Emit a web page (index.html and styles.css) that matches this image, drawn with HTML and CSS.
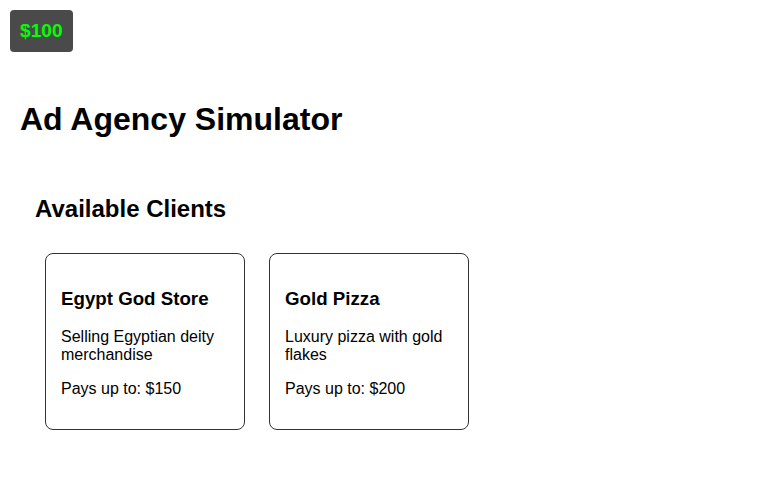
FILE: index.html
```html
<!DOCTYPE html>
<html>
  <head>
    <meta charset="UTF-8">
    <title>Ad Agency Simulator</title>
    <link rel="stylesheet" href="styles.css">
  </head>

  <body>
    <!-- ARGENT -->
    <div class="top-bar">
      <div class="money">$100</div>
    </div>

    <div class="game">
      <h1>Ad Agency Simulator</h1>

      <!-- CLIENTS -->
      <div class="clients">
        <h2>Available Clients</h2>

        <div class="client-list">
          <div class="client-card">
            <h3>Egypt God Store</h3>
            <p>Selling Egyptian deity merchandise</p>
            <p>Pays up to: $150</p>
          </div>

          <div class="client-card">
            <h3>Gold Pizza</h3>
            <p>Luxury pizza with gold flakes</p>
            <p>Pays up to: $200</p>
          </div>
        </div>
      </div>
    </div>
  </body>
</html>
```

FILE: styles.css
```css
/* CSS styles */
body {
  font-family: "Liberation Sans", Arial, sans-serif;
  background-color: white;
  color: black;
  margin: 0;
}

.top-bar {
  padding: 10px;
  display: flex;
}

.money {
  background-color: #4a4a4a;
  color: #00ff00;
  font-weight: bold;
  font-size: 19.2px;
  padding: 10px;
  border-radius: 4px;
}

.game {
  padding: 18px 20px 20px;
}

h1 {
  font-size: 32px;
  margin: 21px 0;
}

.clients {
  padding: 16px 15px 15px;
}

h2 {
  font-size: 24px;
  margin: 20px 0;
}

.client-list {
  display: flex;
  gap: 24px;
  padding: 10px;
}

.client-card {
  width: 168px;
  padding: 15px;
  border: 1px solid #333;
  border-radius: 8px;
}

.client-card h3 {
  font-size: 18.72px;
  margin: 18.72px 0;
}

.client-card p {
  font-size: 16px;
  margin: 16px 0;
}
```
